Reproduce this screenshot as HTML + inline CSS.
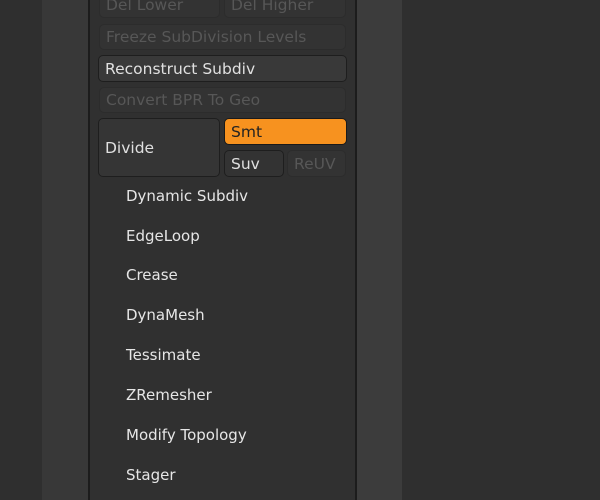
<!DOCTYPE html>
<html><head><style>
body{margin:0;width:600px;height:500px;overflow:hidden;background:#2f2f2f;position:relative;font-family:"DejaVu Sans","Liberation Sans",sans-serif;}
.a{position:absolute}
.b{position:absolute;box-sizing:border-box;border-radius:5px;font-size:15.5px;padding-left:6px;display:flex;align-items:center}
.dis{background:#333;border:1px solid #2c2c2c;color:#575757}
.en{background:#393939;border:1px solid #1e1e1e;color:#e0e0e0}
.m{position:absolute;left:126px;font-size:15px;color:#e6e6e6}
</style></head><body>
<div class="a" style="left:42px;top:0;width:47px;height:500px;background:#383838"></div>
<div class="a" style="left:88px;top:0;width:2px;height:500px;background:#1c1c1c"></div>
<div class="a" style="left:90px;top:0;width:265px;height:500px;background:#303030"></div>
<div class="a" style="left:355px;top:0;width:2px;height:500px;background:#1c1c1c"></div>
<div class="a" style="left:357px;top:0;width:45px;height:500px;background:#3c3c3c"></div>
<div class="b dis" style="left:99px;top:-8px;width:121px;height:26px">Del Lower</div>
<div class="b dis" style="left:224px;top:-8px;width:122px;height:26px">Del Higher</div>
<div class="b dis" style="left:99px;top:24px;width:247px;height:26px">Freeze SubDivision Levels</div>
<div class="b en" style="left:98px;top:55px;width:249px;height:27px">Reconstruct Subdiv</div>
<div class="b dis" style="left:99px;top:87px;width:247px;height:26px">Convert BPR To Geo</div>
<div class="b en" style="left:98px;top:118px;width:122px;height:59px;background:#353535">Divide</div>
<div class="b" style="left:224px;top:118px;width:123px;height:27px;background:#f7921f;border:1px solid #1a1a1a;color:#222">Smt</div>
<div class="b en" style="left:224px;top:150px;width:60px;height:27px;background:#333">Suv</div>
<div class="b dis" style="left:287px;top:150px;width:59px;height:27px">ReUV</div>
<div class="m" style="top:187px">Dynamic Subdiv</div>
<div class="m" style="top:227px">EdgeLoop</div>
<div class="m" style="top:266px">Crease</div>
<div class="m" style="top:306px">DynaMesh</div>
<div class="m" style="top:346px">Tessimate</div>
<div class="m" style="top:386px">ZRemesher</div>
<div class="m" style="top:426px">Modify Topology</div>
<div class="m" style="top:466px">Stager</div>
</body></html>
